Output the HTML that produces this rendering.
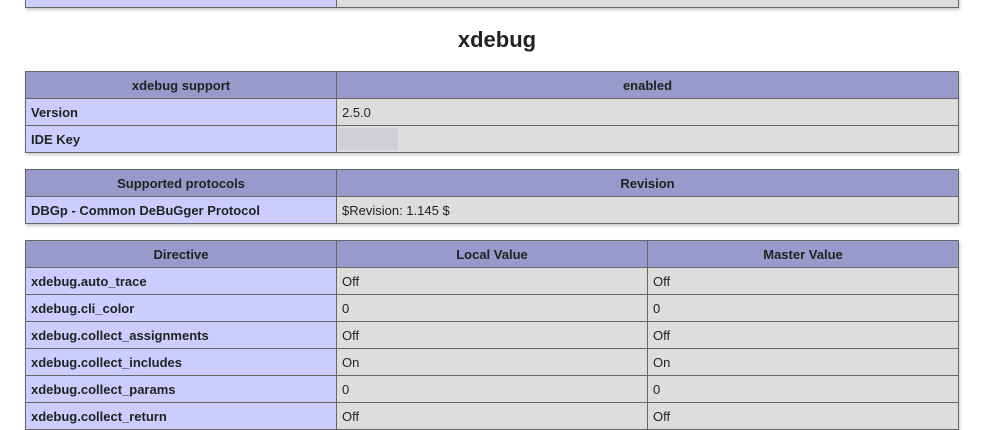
<!DOCTYPE html>
<html><head><style>
body{margin:0;background:#fff;font-family:"Liberation Sans",Arial,sans-serif;font-size:13px;color:#222;width:994px;height:406px;overflow:hidden;position:relative}
table{position:absolute;left:25px;width:934px;border-collapse:collapse;box-shadow:1px 2px 3px #ccc}
td,th{border:1px solid #666;height:27px;padding:0 5px;box-sizing:border-box;vertical-align:middle}
th{background:#9999cc;font-weight:bold;text-align:center}
.e{background:#ccccff;font-weight:bold;width:311px}
.v{background:#ddd}
h2{position:absolute;top:27px;left:0;width:994px;text-align:center;margin:0;font-size:22px;font-weight:bold;color:#222}
</style></head><body>
<table style="top:-20px"><tr><td class="e"></td><td class="v"></td></tr></table>
<h2>xdebug</h2>
<table style="top:71px">
<tr><th style="width:311px">xdebug support</th><th>enabled</th></tr>
<tr><td class="e">Version</td><td class="v">2.5.0</td></tr>
<tr><td class="e">IDE Key</td><td class="v"><span style="display:inline-block;width:60px;height:22px;background:#cfcfd4;margin-left:-4px;vertical-align:middle"></span></td></tr>
</table>
<table style="top:169px">
<tr><th style="width:311px">Supported protocols</th><th>Revision</th></tr>
<tr><td class="e">DBGp - Common DeBuGger Protocol</td><td class="v">$Revision: 1.145 $</td></tr>
</table>
<table style="top:240px">
<tr><th style="width:311px">Directive</th><th style="width:311px">Local Value</th><th>Master Value</th></tr>
<tr><td class="e">xdebug.auto_trace</td><td class="v">Off</td><td class="v">Off</td></tr>
<tr><td class="e">xdebug.cli_color</td><td class="v">0</td><td class="v">0</td></tr>
<tr><td class="e">xdebug.collect_assignments</td><td class="v">Off</td><td class="v">Off</td></tr>
<tr><td class="e">xdebug.collect_includes</td><td class="v">On</td><td class="v">On</td></tr>
<tr><td class="e">xdebug.collect_params</td><td class="v">0</td><td class="v">0</td></tr>
<tr><td class="e">xdebug.collect_return</td><td class="v">Off</td><td class="v">Off</td></tr>
</table>
</body></html>
